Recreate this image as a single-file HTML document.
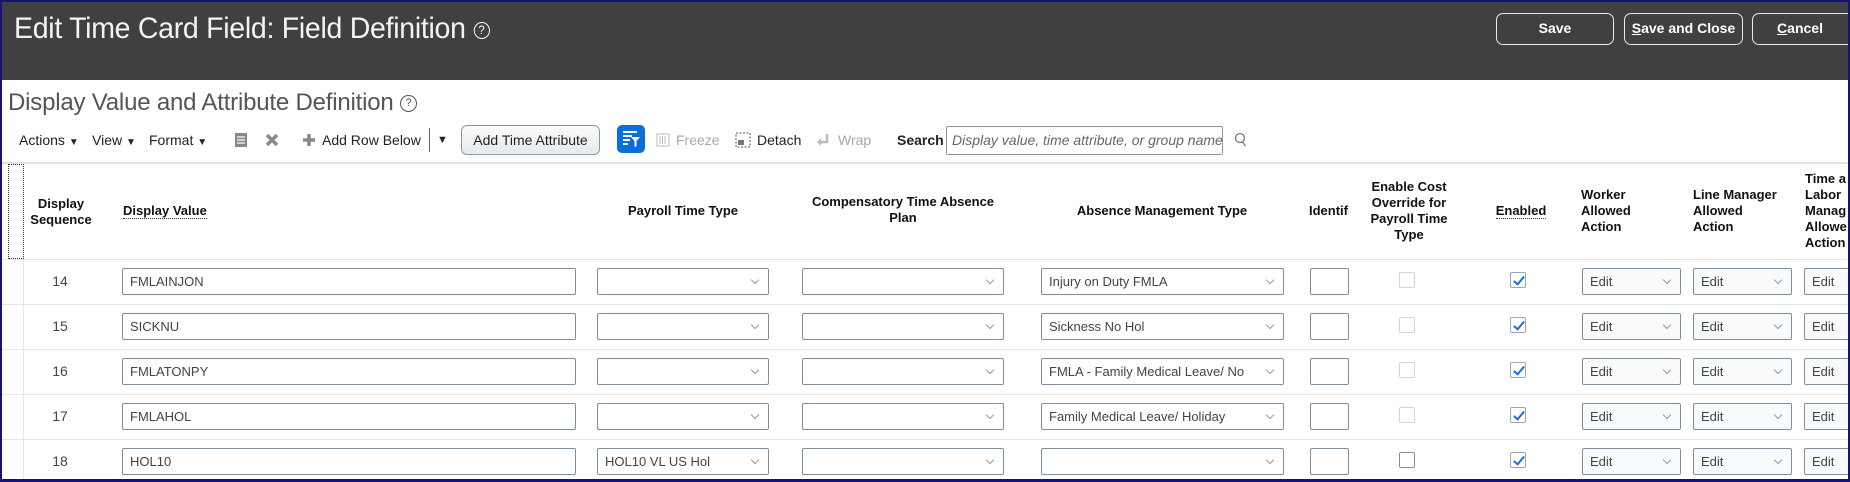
<!DOCTYPE html>
<html><head><meta charset="utf-8">
<style>
*{box-sizing:border-box;margin:0;padding:0}
body{width:1850px;height:482px;overflow:hidden;background:#fff;font-family:"Liberation Sans",Arial,sans-serif;position:relative}
.a{position:absolute;white-space:nowrap}
#frame{position:absolute;left:0;top:0;width:1850px;height:482px;border:2px solid #15137a;border-bottom-width:3px;z-index:50;pointer-events:none}
#hdr{position:absolute;left:0;top:0;width:1850px;height:80px;background:#404040}
.title{left:14px;top:12px;color:#f4f4f4;font-size:30px;transform:scaleX(.95);transform-origin:left;letter-spacing:-.3px}
.btn{position:absolute;top:13px;height:32px;border:1.5px solid #e8e8e8;border-radius:7px;color:#fff;font-weight:bold;font-size:14px;text-align:center;line-height:29px}
.sub{left:8px;top:89px;color:#555;font-size:24px;letter-spacing:-.2px}
.tb{top:132px;font-size:14px;color:#222}
.gr{color:#a8a8a8}
.th{font-size:13px;font-weight:bold;color:#111;text-align:center;line-height:16px}
.ul{border-bottom:1px dotted #333}
.inp{position:absolute;height:27px;border:1px solid #7d8f9c;border-radius:2px;background:#fff;font-size:13px;color:#444;padding-left:7px;line-height:25px;white-space:nowrap;overflow:hidden}
.sel::after{content:"";position:absolute;right:10px;top:8px;width:5px;height:5px;border-right:1px solid #999;border-bottom:1px solid #999;transform:rotate(45deg)}
.ed{background:#f8fafb}
.rl{position:absolute;left:2px;width:1846px;height:1px;background:#e3e7ea}
.num{position:absolute;left:40px;width:40px;text-align:center;font-size:14px;color:#444}
.cb{position:absolute;width:16px;height:16px;border:1px solid #d3d6d8;border-radius:2px;background:#fff}
.cb2{border-color:#7d8f9c}
.ck{position:absolute;width:16px;height:16px;border:1px solid #9aa8b2;border-radius:2px;background:#fff}
.ck::after{content:"";position:absolute;left:5px;top:1px;width:4px;height:9px;border-right:2.5px solid #1b6fd1;border-bottom:2.5px solid #1b6fd1;transform:rotate(40deg)}
</style></head><body>
<div id="hdr"></div>
<div class="a title">Edit Time Card Field: Field Definition <span style="display:inline-block;border:1.5px solid #fff;border-radius:50%;width:17px;height:17px;line-height:14px;text-align:center;font-size:12px;vertical-align:4px">?</span></div>
<div class="btn" style="left:1496px;width:118px">Save</div>
<div class="btn" style="left:1624px;width:119px"><u>S</u>ave and Close</div>
<div class="btn" style="left:1752px;width:110px;padding-right:14px"><u>C</u>ancel</div>

<div class="a sub">Display Value and Attribute Definition <span style="display:inline-block;border:1.5px solid #555;border-radius:50%;width:17px;height:17px;line-height:14px;text-align:center;font-size:11px;vertical-align:4px">?</span></div>

<div class="a tb" style="left:19px">Actions <span style="font-size:10px">▼</span></div>
<div class="a tb" style="left:92px">View <span style="font-size:10px">▼</span></div>
<div class="a tb" style="left:149px">Format <span style="font-size:10px">▼</span></div>
<svg class="a" style="left:234px;top:132px" width="14" height="16"><rect x="1" y="1" width="12" height="14" fill="#888"/><path d="M3 5h8M3 8h8M3 11h8" stroke="#fff" stroke-width="1.3"/></svg>
<svg class="a" style="left:265px;top:133px" width="14" height="14"><path d="M2 2L12 12M12 2L2 12" stroke="#8a8a8a" stroke-width="3.5"/></svg>
<svg class="a" style="left:302px;top:133px" width="14" height="14"><path d="M7 1v12M1 7h12" stroke="#888" stroke-width="3.5"/></svg>
<div class="a tb" style="left:322px;font-size:14px">Add Row Below</div>
<div class="a" style="left:429px;top:128px;width:1px;height:24px;background:#666"></div>
<div class="a tb" style="left:437px;font-size:11px;top:134px">▼</div>
<div class="a" style="left:461px;top:125px;width:139px;height:30px;border:1px solid #8a98a3;border-radius:6px;background:linear-gradient(#fafbfc,#e6eaed);font-size:14px;text-align:center;line-height:28px;color:#222">Add Time Attribute</div>
<div class="a" style="left:617px;top:125px;width:28px;height:28px;background:#0a6fd6;border-radius:5px"></div>
<svg class="a" style="left:621px;top:130px" width="20" height="18"><path d="M2 2h14M2 6h9M2 10h7M2 14h5" stroke="#fff" stroke-width="2"/><path d="M10 7h9l-3.5 4v5l-2 1v-6z" fill="#fff"/></svg>
<svg class="a" style="left:656px;top:133px" width="14" height="14"><rect x="1" y="1" width="12" height="12" fill="none" stroke="#bbb"/><path d="M4 3v8M6.5 3v8M9 3v8" stroke="#bbb"/></svg>
<div class="a tb gr" style="left:676px">Freeze</div>
<svg class="a" style="left:735px;top:132px" width="16" height="16"><rect x="1" y="1" width="14" height="14" fill="none" stroke="#555" stroke-dasharray="2 1.5"/><rect x="3" y="8" width="6" height="5" fill="#777"/></svg>
<div class="a tb" style="left:757px">Detach</div>
<svg class="a" style="left:816px;top:133px" width="14" height="14"><path d="M11 1v8H3" fill="none" stroke="#bbb" stroke-width="2.5"/><path d="M1 9l4-4v8z" fill="#bbb"/></svg>
<div class="a tb gr" style="left:838px">Wrap</div>
<div class="a tb" style="left:897px;font-weight:bold">Search</div>
<div class="a" style="left:946px;top:126px;width:277px;height:29px;border:1px solid #8a98a3;border-radius:2px;font-size:14px;color:#666;font-style:italic;padding-left:5px;line-height:27px;overflow:hidden;white-space:nowrap">Display value, time attribute, or group name</div>
<svg class="a" style="left:1234px;top:132px" width="14" height="16"><circle cx="6" cy="6" r="4.5" fill="none" stroke="#777" stroke-width="1.3"/><path d="M8.5 10l3 4" stroke="#777" stroke-width="1.3"/></svg>
<div class="a" style="left:2px;top:162px;width:1846px;height:2px;background:#dde3e8"></div>

<div class="a" style="left:8px;top:164px;width:16px;height:95px;border:1px dotted #333"></div>
<div class="a" style="left:23px;top:259px;width:1px;height:223px;background:#e3e7ea"></div>
<div class="a th" style="left:30px;width:62px;top:196px">Display<br>Sequence</div>
<div class="a th" style="left:123px;top:203px"><span class="ul">Display Value</span></div>
<div class="a th" style="left:613px;width:140px;top:203px">Payroll Time Type</div>
<div class="a th" style="left:798px;width:210px;top:194px">Compensatory Time Absence<br>Plan</div>
<div class="a th" style="left:1062px;width:200px;top:203px">Absence Management Type</div>
<div class="a th" style="left:1309px;width:40px;top:203px;text-align:left;overflow:hidden">Identifi</div>
<div class="a th" style="left:1359px;width:100px;top:179px">Enable Cost<br>Override for<br>Payroll Time<br>Type</div>
<div class="a th" style="left:1493px;width:56px;top:203px"><span class="ul">Enabled</span></div>
<div class="a th" style="left:1581px;top:187px;text-align:left">Worker<br>Allowed<br>Action</div>
<div class="a th" style="left:1693px;top:187px;text-align:left">Line Manager<br>Allowed<br>Action</div>
<div class="a th" style="left:1805px;top:171px;text-align:left">Time a<br>Labor<br>Manag<br>Allowe<br>Action</div>

<div class="rl" style="top:259px"></div>
<div class="rl" style="top:304px"></div>
<div class="rl" style="top:349px"></div>
<div class="rl" style="top:394px"></div>
<div class="rl" style="top:439px"></div>

<div class="num" style="top:273px">14</div>
<div class="inp" style="left:122px;top:268px;width:454px">FMLAINJON</div>
<div class="inp sel" style="left:597px;top:268px;width:172px"></div>
<div class="inp sel" style="left:802px;top:268px;width:202px"></div>
<div class="inp sel" style="left:1041px;top:268px;width:243px">Injury on Duty FMLA</div>
<div class="inp" style="left:1310px;top:268px;width:39px"></div>
<div class="cb" style="left:1399px;top:272px"></div>
<div class="ck" style="left:1510px;top:272px"></div>
<div class="inp sel ed" style="left:1582px;top:268px;width:99px">Edit</div>
<div class="inp sel ed" style="left:1693px;top:268px;width:99px">Edit</div>
<div class="inp ed" style="left:1804px;top:268px;width:60px">Edit</div>

<div class="num" style="top:318px">15</div>
<div class="inp" style="left:122px;top:313px;width:454px">SICKNU</div>
<div class="inp sel" style="left:597px;top:313px;width:172px"></div>
<div class="inp sel" style="left:802px;top:313px;width:202px"></div>
<div class="inp sel" style="left:1041px;top:313px;width:243px">Sickness No Hol</div>
<div class="inp" style="left:1310px;top:313px;width:39px"></div>
<div class="cb" style="left:1399px;top:317px"></div>
<div class="ck" style="left:1510px;top:317px"></div>
<div class="inp sel ed" style="left:1582px;top:313px;width:99px">Edit</div>
<div class="inp sel ed" style="left:1693px;top:313px;width:99px">Edit</div>
<div class="inp ed" style="left:1804px;top:313px;width:60px">Edit</div>

<div class="num" style="top:363px">16</div>
<div class="inp" style="left:122px;top:358px;width:454px">FMLATONPY</div>
<div class="inp sel" style="left:597px;top:358px;width:172px"></div>
<div class="inp sel" style="left:802px;top:358px;width:202px"></div>
<div class="inp sel" style="left:1041px;top:358px;width:243px">FMLA - Family Medical Leave/ No</div>
<div class="inp" style="left:1310px;top:358px;width:39px"></div>
<div class="cb" style="left:1399px;top:362px"></div>
<div class="ck" style="left:1510px;top:362px"></div>
<div class="inp sel ed" style="left:1582px;top:358px;width:99px">Edit</div>
<div class="inp sel ed" style="left:1693px;top:358px;width:99px">Edit</div>
<div class="inp ed" style="left:1804px;top:358px;width:60px">Edit</div>

<div class="num" style="top:408px">17</div>
<div class="inp" style="left:122px;top:403px;width:454px">FMLAHOL</div>
<div class="inp sel" style="left:597px;top:403px;width:172px"></div>
<div class="inp sel" style="left:802px;top:403px;width:202px"></div>
<div class="inp sel" style="left:1041px;top:403px;width:243px">Family Medical Leave/ Holiday</div>
<div class="inp" style="left:1310px;top:403px;width:39px"></div>
<div class="cb" style="left:1399px;top:407px"></div>
<div class="ck" style="left:1510px;top:407px"></div>
<div class="inp sel ed" style="left:1582px;top:403px;width:99px">Edit</div>
<div class="inp sel ed" style="left:1693px;top:403px;width:99px">Edit</div>
<div class="inp ed" style="left:1804px;top:403px;width:60px">Edit</div>

<div class="num" style="top:453px">18</div>
<div class="inp" style="left:122px;top:448px;width:454px">HOL10</div>
<div class="inp sel" style="left:597px;top:448px;width:172px">HOL10 VL US Hol</div>
<div class="inp sel" style="left:802px;top:448px;width:202px"></div>
<div class="inp sel" style="left:1041px;top:448px;width:243px"></div>
<div class="inp" style="left:1310px;top:448px;width:39px"></div>
<div class="cb cb2" style="left:1399px;top:452px"></div>
<div class="ck" style="left:1510px;top:452px"></div>
<div class="inp sel ed" style="left:1582px;top:448px;width:99px">Edit</div>
<div class="inp sel ed" style="left:1693px;top:448px;width:99px">Edit</div>
<div class="inp ed" style="left:1804px;top:448px;width:60px">Edit</div>

<div id="frame"></div>
</body></html>
